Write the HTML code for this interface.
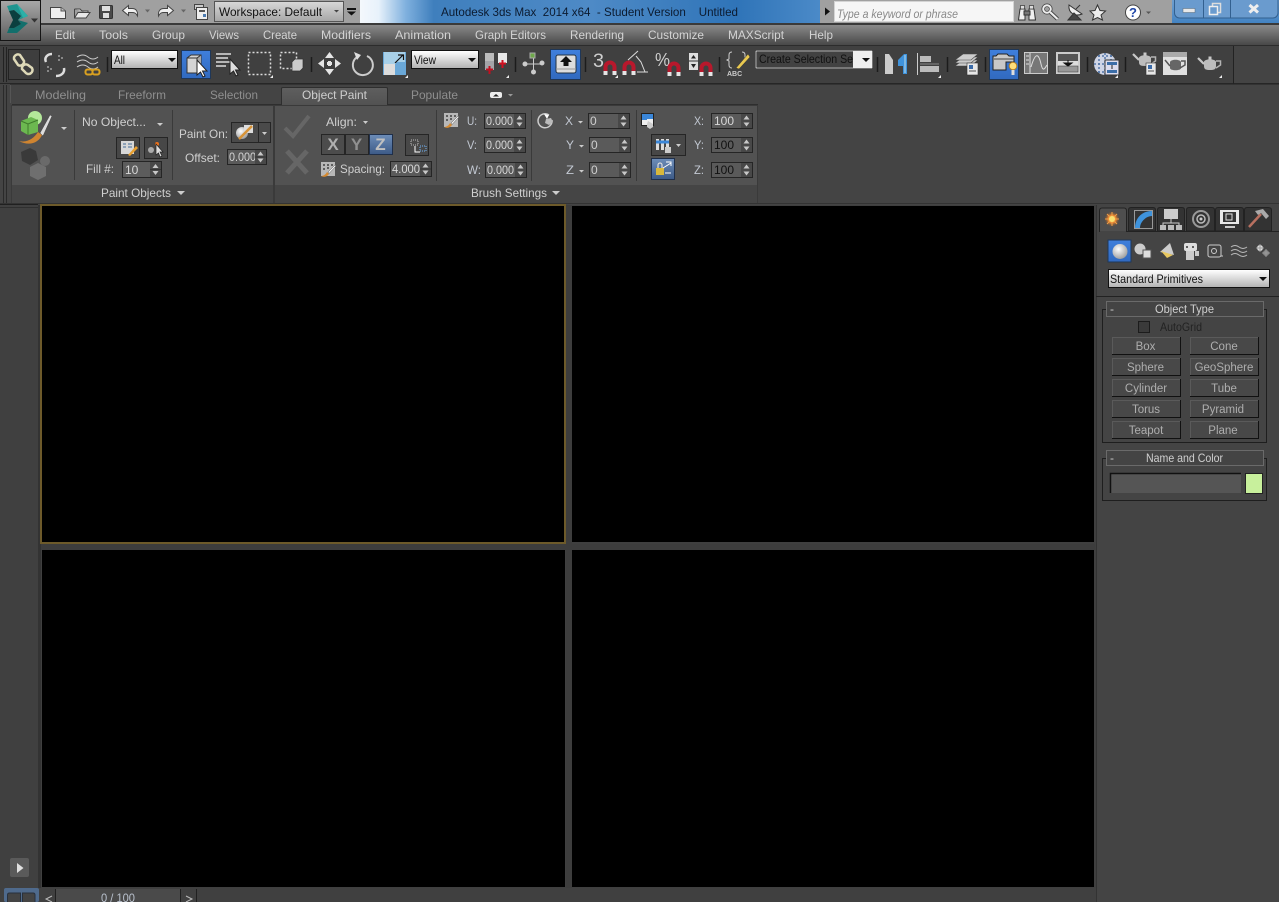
<!DOCTYPE html>
<html><head><meta charset="utf-8"><title>Autodesk 3ds Max 2014</title>
<style>
html,body{margin:0;padding:0;background:#444;overflow:hidden;width:1279px;height:902px}
svg{display:block;position:absolute;left:0;top:0}
text{font-family:"Liberation Sans",sans-serif;font-size:12px;fill:#c8c8c8}
.m text{fill:#d4d4d4}
.t text{fill:#8f8f8f}
.l text{fill:#c2c8d2}
.p text{fill:#aeaeae;font-size:11.5px;text-anchor:middle}
</style></head><body>
<svg width="1279" height="902" viewBox="0 0 1279 902" xmlns="http://www.w3.org/2000/svg">
<defs>
<linearGradient id="menu" x1="0" y1="0" x2="0" y2="1"><stop offset="0" stop-color="#8a8a8a"/><stop offset="1" stop-color="#484848"/></linearGradient>
<linearGradient id="logo" x1="0" y1="0" x2="0" y2="1"><stop offset="0" stop-color="#a8a8a8"/><stop offset="1" stop-color="#5e5e5e"/></linearGradient>
<linearGradient id="dd" x1="0" y1="0" x2="0" y2="1"><stop offset="0" stop-color="#fff"/><stop offset="1" stop-color="#b4b4b4"/></linearGradient>
<linearGradient id="ws" x1="0" y1="0" x2="0" y2="1"><stop offset="0" stop-color="#d8d8d8"/><stop offset="1" stop-color="#a6a6a6"/></linearGradient>
<linearGradient id="blue" x1="0" y1="0" x2="1" y2="0"><stop offset="0" stop-color="#f4f8fc"/><stop offset=".04" stop-color="#e8f2fb"/><stop offset=".1" stop-color="#7fb0de"/><stop offset=".16" stop-color="#3f7fbd"/><stop offset=".5" stop-color="#4e8ac6"/><stop offset=".82" stop-color="#2f74b8"/><stop offset="1" stop-color="#4b8ac8"/></linearGradient>
<linearGradient id="win" x1="0" y1="0" x2="0" y2="1"><stop offset="0" stop-color="#86abd3"/><stop offset="1" stop-color="#3d7dbd"/></linearGradient>
<linearGradient id="z" x1="0" y1="0" x2="0" y2="1"><stop offset="0" stop-color="#6d8db8"/><stop offset="1" stop-color="#3c5a87"/></linearGradient>
<linearGradient id="sel" x1="0" y1="0" x2="0" y2="1"><stop offset="0" stop-color="#3f7fdc"/><stop offset="1" stop-color="#316ac0"/></linearGradient>
<linearGradient id="tab" x1="0" y1="0" x2="0" y2="1"><stop offset="0" stop-color="#5f5f5f"/><stop offset="1" stop-color="#525252"/></linearGradient>
<radialGradient id="sph" cx=".4" cy=".35" r=".7"><stop offset="0" stop-color="#fff"/><stop offset="1" stop-color="#9a9a9a"/></radialGradient>
<radialGradient id="sun" cx=".5" cy=".5" r=".5"><stop offset="0" stop-color="#ffe27a"/><stop offset=".5" stop-color="#e8802c"/><stop offset="1" stop-color="#5a4a3a" stop-opacity="0"/></radialGradient>
<g id="up"><path d="M-3 2L0-2 3 2z" fill="#c8c8c8"/></g>
<g id="dn"><path d="M-3-2L0 2 3-2z" fill="#c8c8c8"/></g>
<g id="mag"><path d="M-6.500 6V-1a6.500 6.500 0 0 1 13 0V6H2.500V-1a2.500 2.500 0 0 0-5 0V6z" fill="#b8182c"/><rect x="-6.500" y="3" width="4" height="4" fill="#e4e4e4"/><rect x="2.500" y="3" width="4" height="4" fill="#e4e4e4"/></g>
<g id="corner"><path d="M0 3L3 0V3z" fill="#eee"/></g>
<g id="teapot"><path d="M7 6.500C9 3.500 17 3.500 19 6.500V11C19 14.500 17 15 13 15S7 14.500 7 11z" fill="#bdbdbd"/><path d="M7 9L1 3" stroke="#c8c8c8" stroke-width="2.200" fill="none"/><path d="M19 6H23.500V10L19 13" stroke="#b4b4b4" stroke-width="1.500" fill="none"/><rect x="11.500" y="1.500" width="3" height="3" fill="#c8c8c8"/></g>
<g id="brush"><rect x="0" y="0" width="14" height="14" fill="#b8b8b8"/><g fill="#5e5e5e"><rect x="2" y="2" width="2" height="2"/><rect x="6" y="2" width="2" height="2"/><rect x="2" y="6" width="2" height="2"/><rect x="6" y="5" width="2" height="2"/><rect x="10" y="2" width="2" height="2"/></g><path d="M0 14C3 14 5 12 6 10L8 12C6 15 3 15.500 0 14z" fill="#d68a30"/><path d="M7 10L14 3 15 4 8 11.500z" fill="#f0f0f0" stroke="#333" stroke-width=".4"/></g>
</defs>

<rect width="1279" height="902" fill="#444"/>

<!-- title bar -->
<rect x="0" y="0" width="360" height="23" fill="#a0a0a0"/>
<rect x="360" y="0" width="460" height="23" fill="url(#blue)"/>
<rect x="820" y="0" width="352" height="23" fill="#a0a0a0"/>
<rect x="1172" y="0" width="107" height="23" fill="#4d8dcb"/>
<rect x="1172" y="0" width="107" height="23" fill="url(#win)" opacity=".6"/>
<rect x="0" y="23" width="1279" height="2" fill="#3a3a3a"/>
<path d="M1174.500 0V13a5 5 0 0 0 5 5H1273a5 5 0 0 0 5-5V0" fill="#6a9bce" stroke="#33608f"/>
<path d="M1203.500 0V18M1230.500 0V18" stroke="#33608f"/>
<rect x="1183" y="8.500" width="12" height="4" fill="#e8e8e8" stroke="#567" stroke-width=".5"/>
<rect x="1212.500" y="3.500" width="8" height="9" fill="none" stroke="#ddd" stroke-width="1.500"/><rect x="1209.500" y="6.500" width="8" height="8" fill="#6a9bce" stroke="#eee" stroke-width="1.500"/>
<path d="M1249.500 5L1258 12.500M1258 5L1249.500 12.500" stroke="#eee" stroke-width="3"/>

<!-- quick access icons -->
<path d="M50.500 7.500H61L65.500 11V18.500H50.500z" fill="#efefef" stroke="#444"/><path d="M61 7.500V11H65.500" fill="#bbb" stroke="#555"/>
<path d="M74.500 9H80L82 11H88V13" fill="#ddd" stroke="#444"/><path d="M74.500 9V18H86L90 12.500H78L74.500 18" fill="#e8e8e8" stroke="#444"/>
<rect x="99.500" y="5.500" width="13" height="13" rx="1" fill="#4a4a4a" stroke="#333"/><rect x="102" y="6" width="8" height="5" fill="#e0e0e0"/><rect x="103" y="13" width="6" height="5" fill="#e0e0e0"/>
<path d="M122.500 10.500L128.500 5.500V8.500H132C136 8.500 138 11 137.500 16C136 13 134.500 12.500 132 12.500H128.500V15.500z" fill="#f0f0f0" stroke="#444"/>
<path d="M145 9.500H150L147.500 12.500z" fill="#666"/>
<path d="M173.500 10.500L167.500 5.500V8.500H164C160 8.500 158 11 158.500 16C160 13 161.500 12.500 164 12.500H167.500V15.500z" fill="#f0f0f0" stroke="#444"/>
<path d="M181 9.500H186L183.500 12.500z" fill="#666"/>
<rect x="194.500" y="4.500" width="9" height="5" fill="#ccc" stroke="#444"/><rect x="196.500" y="7.500" width="11" height="12" fill="#eee" stroke="#444"/><rect x="199" y="10" width="6" height="2" fill="#555"/><rect x="203" y="14" width="3" height="3" fill="#4a7ab0"/>

<!-- workspace -->
<rect x="214.500" y="1.500" width="129" height="20" fill="url(#ws)" stroke="#555"/>
<text x="219" y="16" textLength="103" lengthAdjust="spacingAndGlyphs" fill="#111" style="fill:#111">Workspace: Default</text>
<path d="M334 10H339L336.500 12.500z" fill="#444"/>
<rect x="347" y="8" width="9" height="2" fill="#111"/><path d="M347 11.500H356L351.500 15.500z" fill="#111"/>

<text x="441" y="16" textLength="297" lengthAdjust="spacingAndGlyphs" style="fill:#0c1b30" xml:space="preserve">Autodesk 3ds Max  2014 x64  - Student Version    Untitled</text>

<!-- search -->
<path d="M825 7.500L830 11.500 825 15.500z" fill="#111"/>
<rect x="834" y="1" width="180" height="21" fill="#f6f6f6"/><rect x="834.500" y="1.500" width="179" height="20" fill="none" stroke="#d4d4d4"/>
<text x="837" y="18" textLength="121" lengthAdjust="spacingAndGlyphs" font-style="italic" style="fill:#888">Type a keyword or phrase</text>
<!-- binoculars -->
<path d="M1020 9H1025V20H1018.500zM1029 9H1034L1035.500 20H1029z" fill="#f0f0f0" stroke="#333"/><rect x="1024" y="11" width="6" height="4" fill="#777" stroke="#333"/><rect x="1020.500" y="5.500" width="4" height="3.500" fill="#ddd" stroke="#333" stroke-width=".7"/><rect x="1029.500" y="5.500" width="4" height="3.500" fill="#ddd" stroke="#333" stroke-width=".7"/>
<!-- key -->
<circle cx="1047" cy="9" r="3.800" fill="none" stroke="#444" stroke-width="3.500"/><circle cx="1047" cy="9" r="3.800" fill="none" stroke="#eee" stroke-width="2"/><path d="M1050 12L1057.500 19" stroke="#444" stroke-width="4"/><path d="M1050 12L1057.500 19" stroke="#eee" stroke-width="2.200"/>
<!-- satellite -->
<path d="M1069 5C1068 13 1075 17 1082 14z" fill="#eee" stroke="#333"/><path d="M1074 13L1068 20H1081z" fill="#444" stroke="#333"/><path d="M1076 9L1080 5" stroke="#333"/>
<!-- star -->
<path d="M1097.500 5L1100 10.500 1105.500 11 1101 15 1102.500 20 1097.500 17.500 1092.500 20 1094 15 1090 11 1095 10.500z" fill="#eee" stroke="#333"/>
<!-- help -->
<circle cx="1133" cy="12.500" r="7.500" fill="#fff" stroke="#444"/><text x="1129" y="17" style="fill:#1f46a8;font-weight:bold;font-size:13px">?</text>
<path d="M1146 11.500H1151L1148.500 14z" fill="#555"/>

<!-- menu -->
<rect x="0" y="25" width="1279" height="20" fill="url(#menu)"/>
<g class="m">
<text x="55" y="39" textLength="20" lengthAdjust="spacingAndGlyphs">Edit</text>
<text x="99" y="39" textLength="29" lengthAdjust="spacingAndGlyphs">Tools</text>
<text x="152" y="39" textLength="33" lengthAdjust="spacingAndGlyphs">Group</text>
<text x="209" y="39" textLength="30" lengthAdjust="spacingAndGlyphs">Views</text>
<text x="263" y="39" textLength="34" lengthAdjust="spacingAndGlyphs">Create</text>
<text x="321" y="39" textLength="50" lengthAdjust="spacingAndGlyphs">Modifiers</text>
<text x="395" y="39" textLength="56" lengthAdjust="spacingAndGlyphs">Animation</text>
<text x="475" y="39" textLength="71" lengthAdjust="spacingAndGlyphs">Graph Editors</text>
<text x="570" y="39" textLength="54" lengthAdjust="spacingAndGlyphs">Rendering</text>
<text x="648" y="39" textLength="56" lengthAdjust="spacingAndGlyphs">Customize</text>
<text x="728" y="39" textLength="56" lengthAdjust="spacingAndGlyphs">MAXScript</text>
<text x="809" y="39" textLength="24" lengthAdjust="spacingAndGlyphs">Help</text>
</g>

<!-- logo (over the menu and title bar) -->
<rect x="0.500" y="0.500" width="40" height="40" fill="url(#logo)" stroke="#151515"/>
<path d="M7 6L17 4 28 16 18 20 21 16 14 10 9 11z" fill="#1f948f"/>
<path d="M7 33L17 33 28 23 18 20 21 24 14 28 9 28z" fill="#136f6c"/>
<path d="M9 11L14 10 21 16 18 20 21 24 14 28 9 28 13 20z" fill="#0b3f3f"/>
<path d="M17 4L28 16 23 18z" fill="#2bb0a8"/>
<path d="M31 18.500H38L34.500 22.500z" fill="#333"/>

<!-- main toolbar -->
<rect x="0" y="45" width="1233" height="39" fill="#404040"/>
<rect x="0" y="45" width="1279" height="1" fill="#2c2c2c"/>
<rect x="0" y="83" width="1279" height="1" fill="#262626"/>
<rect x="1233" y="46" width="1" height="38" fill="#222"/>
<path d="M3.500 47V82M6.500 47V82" stroke="#222"/>
<g stroke="#1c1c1c" stroke-width="1.500"><path d="M107.500 57V72M311.500 57V72M515.500 57V72M585.500 57V72M719.500 57V72M877.500 57V72M947.500 57V72M985.500 57V72M1087.500 57V72M1125.500 57V72"/></g>

<!-- link -->
<rect x="8.500" y="49.500" width="31" height="30" fill="#3e3e3e" stroke="#222"/>
<path d="M20 55a4 4 0 0 0-6 4l4 6a4 4 0 0 0 6-4z" fill="none" stroke="#ded9b8" stroke-width="2.500"/><path d="M28 65a4 4 0 0 0-6 4l3 3a4 4 0 0 0 7-4z" fill="none" stroke="#ded9b8" stroke-width="2.500"/>
<!-- unlink -->
<path d="M52 54c-5 0-8 4-6 8M56 76c5 0 9-3 8-8" fill="none" stroke="#ddd" stroke-width="2.500"/>
<g fill="#888"><rect x="58" y="55" width="2" height="2"/><rect x="61" y="57" width="2" height="2"/><rect x="58" y="59" width="2" height="2"/><rect x="47" y="66" width="2" height="2"/><rect x="50" y="68" width="2" height="2"/><rect x="47" y="70" width="2" height="2"/></g>
<!-- bind -->
<g fill="none" stroke="#ccc"><path d="M77 57q6-4 11 0t10 0M77 62q6-4 11 0t10 0M77 67q6-4 11 0t10 0"/></g>
<rect x="85.500" y="69.500" width="7" height="5" rx="2" fill="none" stroke="#d9a020" stroke-width="2"/><rect x="92.500" y="69.500" width="7" height="5" rx="2" fill="none" stroke="#d9a020" stroke-width="2"/>

<!-- All dropdown -->
<rect x="111" y="50" width="67" height="19" fill="#111"/><rect x="112" y="51" width="65" height="17" fill="url(#dd)"/>
<text x="114" y="64" textLength="11" lengthAdjust="spacingAndGlyphs" style="fill:#111">All</text>
<path d="M168 58H176L172 62z" fill="#111"/>
<!-- select -->
<rect x="181" y="50" width="30" height="29" fill="#1f3758"/><rect x="182" y="51" width="28" height="27" fill="url(#sel)"/>
<path d="M187 58L191 55H201V70L197 73H187z" fill="#d4d4d4" stroke="#333"/><path d="M197 58L201 55V70L197 73z" fill="#a8a8a8"/><path d="M197 58H187M197 58L201 55M197 58V73" stroke="#333" fill="none"/>
<path d="M197 60V75L200.500 72 203 77 205 76 202.500 71H207z" fill="#fff" stroke="#222"/>
<!-- select by name -->
<path d="M216 54H231M216 58H228M216 62H231M216 66H226" stroke="#ddd" stroke-width="1.500"/>
<path d="M230 59V74L233.500 71 236 76 238 75 235.500 70H240z" fill="#ddd" stroke="#222"/>
<!-- rect region -->
<rect x="248.500" y="52.500" width="22" height="22" fill="none" stroke="#ddd" stroke-width="1.500" stroke-dasharray="2 2"/><use href="#corner" x="270" y="75"/>
<!-- window/crossing -->
<rect x="280.500" y="52.500" width="16" height="16" fill="none" stroke="#ddd" stroke-dasharray="2 2" stroke-width="1.500"/>
<path d="M292 62L295 59H303V68L300 71H292z" fill="#ccc" stroke="#333" stroke-width=".7"/>
<!-- move -->
<g fill="#e6e6e6"><path d="M329.500 52L334 58H325zM329.500 75L334 69H325zM318 63.500L324 59V68zM341 63.500L335 59V68z"/><rect x="328" y="61" width="3" height="5"/><rect x="327" y="62" width="5" height="3"/></g>
<!-- rotate -->
<path d="M367 56a10 10 0 1 1-10 1" fill="none" stroke="#ccc" stroke-width="2"/><path d="M354 52L361 55 357 60z" fill="#ddd"/>
<!-- scale -->
<rect x="383" y="52" width="23" height="23" fill="#6aa8d8"/><rect x="384" y="64" width="11" height="11" fill="#ddd"/><path d="M384 52H405V62H396V64H384z" fill="#a8d0e8"/><path d="M395 63L403 55M398 55H403.500V60" stroke="#111" stroke-width="1.200" fill="none"/><use href="#corner" x="405" y="75"/>
<!-- View dropdown -->
<rect x="411" y="50" width="68" height="19" fill="#111"/><rect x="412" y="51" width="66" height="17" fill="url(#dd)"/>
<text x="414" y="64" textLength="22" lengthAdjust="spacingAndGlyphs" style="fill:#111">View</text>
<path d="M468 58H476L472 62z" fill="#111"/>
<!-- snap pivot -->
<rect x="485" y="53" width="9" height="17" fill="#a4a4a8"/><rect x="485" y="53" width="9" height="8" fill="#bbb"/><path d="M489.500 66V74M486 69.500H493" stroke="#c01020" stroke-width="2"/>
<rect x="498" y="53" width="9" height="10" fill="#e8e8e8"/><path d="M502.500 60V68M499 63.500H506" stroke="#d01020" stroke-width="2"/><use href="#corner" x="506" y="75"/>
<!-- pivot -->
<path d="M533.500 56V74M525 64H542" stroke="#ccc"/><rect x="530" y="53" width="5" height="5" fill="#6ea84a" stroke="#aaa"/><circle cx="525" cy="64" r="2.500" fill="#ccc"/><circle cx="542" cy="63" r="2.500" fill="#ccc"/><circle cx="533.500" cy="72" r="2.500" fill="#ccc"/>
<!-- keyboard override -->
<rect x="550" y="49" width="31" height="31" fill="#1f3758"/><rect x="551" y="50" width="29" height="29" fill="url(#sel)"/><rect x="556" y="55" width="20" height="18" rx="2" fill="#ddd" stroke="#234"/><path d="M556 69H576" stroke="#999"/><path d="M566 56L572 62H568.500V66H563.500V62H560z" fill="#111"/>
<!-- snaps -->
<text x="593" y="67" style="font-size:19px;fill:#cfcfcf" textLength="11" lengthAdjust="spacingAndGlyphs">3</text><use href="#mag" x="610" y="68"/><use href="#corner" x="615" y="75"/>
<path d="M628 60L638 51" stroke="#ddd"/><use href="#mag" x="629" y="68"/><path d="M636 56L641 62 645 72M637 72H648" stroke="#ddd" fill="none"/>
<text x="655" y="66" style="font-size:18px;fill:#cfcfcf" textLength="15" lengthAdjust="spacingAndGlyphs">%</text><use href="#mag" x="674" y="69"/>
<rect x="689" y="53" width="9" height="17" fill="#ddd"/><path d="M689 61H698" stroke="#333"/><path d="M693.500 55L696 58.500H691zM693.500 68L696 64H691z" fill="#222"/><use href="#mag" x="706" y="69"/>
<!-- named sel -->
<path d="M732 52c-2 0-3 1-3 3v4l-2 1 2 1v4c0 2 1 3 3 3M742 52c2 0 3 1 3 3v4" fill="none" stroke="#ccc"/>
<path d="M736 68L748 54 750 57 739 69z" fill="#e8c850" stroke="#333" stroke-width=".5"/>
<text x="727" y="76" style="font-size:7px;font-weight:bold;fill:#ccc">ABC</text>
<rect x="755" y="50" width="118" height="19" fill="#111"/><rect x="756" y="51" width="116" height="17" fill="none" stroke="#ddd"/><rect x="757" y="52" width="96" height="15" fill="#424242"/>
<text x="759" y="63" textLength="94" lengthAdjust="spacingAndGlyphs" style="fill:#111">Create Selection Se</text>
<rect x="853" y="51" width="19" height="17" fill="#f0f0f0"/><path d="M862 58H870L866 62z" fill="#111"/>
<!-- mirror -->
<path d="M885 54H889L893 60V74H885z" fill="#ccc"/><path d="M907 54H904L898 60V66H903V74H907z" fill="#3f93dc"/><path d="M905 55V73" stroke="#bde" stroke-width="1"/>
<!-- align -->
<path d="M917.500 53V75" stroke="#ccc"/><rect x="920" y="56" width="11" height="6" fill="#bbb"/><rect x="920" y="66" width="19" height="6" fill="#bbb"/><path d="M920 64H939" stroke="#888"/><use href="#corner" x="938" y="75"/>
<!-- layers -->
<g fill="#ccc" stroke="#444" stroke-width=".6"><path d="M955 66L963 60H978L971 66z"/><path d="M955 63L963 57H978L971 63z"/><path d="M955 60L963 54H978L971 60z"/></g>
<rect x="967" y="63" width="11" height="12" fill="#e8e8e8" stroke="#333" stroke-width=".6"/><rect x="969" y="65" width="4" height="4" fill="#3a6aa8"/><path d="M969 71H976" stroke="#555"/>
<!-- scene explorer -->
<rect x="989" y="49" width="30" height="31" fill="#1f3758"/><rect x="990" y="50" width="28" height="29" fill="url(#sel)"/><path d="M993 70V56H996L998 54H1007L1009 56H1014V62H1006V70z" fill="#c8c8c8" stroke="#222"/><path d="M994 59H1014" stroke="#444"/><circle cx="1013" cy="66" r="3.800" fill="#ffde7a" stroke="#b57f20"/><rect x="1011.500" y="70" width="3" height="5" fill="#ddd"/>
<!-- curve editor -->
<rect x="1024" y="52" width="24" height="22" fill="#ccc"/><rect x="1025" y="53" width="22" height="20" fill="#777"/><path d="M1030 53V73M1026 56H1029M1026 60H1029M1026 64H1029" stroke="#ddd"/><path d="M1031 67C1036 50 1039 55 1041 64S1045 68 1047 65" fill="none" stroke="#ddd"/>
<!-- schematic -->
<rect x="1056" y="52" width="24" height="22" fill="#ccc"/><rect x="1058" y="54" width="20" height="7" fill="#555"/><rect x="1058" y="61" width="20" height="5" fill="#ddd"/><rect x="1058" y="66" width="20" height="6" fill="#999" stroke="#333" stroke-width=".5"/><path d="M1068 60V64M1064 63L1068 66 1072 63z" fill="#111" stroke="#111"/>
<!-- material -->
<circle cx="1105" cy="64" r="11" fill="#cfd5e6"/><path d="M1098 56L1112 56M1094 64H1116M1098 72H1112M1105 53V75M1099 55V73M1111 55V73" stroke="#5577a8" stroke-width="1.500" stroke-dasharray="2 2"/>
<rect x="1105" y="60" width="14" height="15" fill="#dde" stroke="#333"/><rect x="1107" y="62" width="10" height="3" fill="#3c6ea8"/><rect x="1107" y="70" width="10" height="3" fill="#3c6ea8"/><path d="M1112 65V69" stroke="#222"/><use href="#corner" x="1115" y="75"/>
<!-- render setup teapot -->
<use href="#teapot" x="1132" y="51"/>
<rect x="1146" y="63" width="10" height="12" fill="#e8e8e8" stroke="#333" stroke-width=".6"/><rect x="1148" y="65" width="4" height="4" fill="#3a6aa8"/><path d="M1148 71H1154" stroke="#555"/>
<!-- rendered frame -->
<rect x="1163" y="52" width="24" height="23" fill="#e0e0e0"/><rect x="1163" y="52" width="24" height="5" fill="#aaa"/>
<path d="M1170 62C1171 59 1180 59 1181 62V68C1181 71 1170 71 1170 68z" fill="#666"/><path d="M1165 60L1170 66M1181 61H1185V65L1180 68" fill="none" stroke="#555" stroke-width="1.500"/>
<!-- render teapot -->
<use href="#teapot" x="1197" y="55"/><use href="#corner" x="1219" y="75"/>

<!-- ribbon -->
<path d="M3.500 85V204M6.500 85V204" stroke="#2a2a2a"/>
<rect x="10" y="84" width="1269" height="1" fill="#333"/>
<rect x="10" y="85" width="1" height="18" fill="#555"/>
<g class="t">
<text x="35" y="99" textLength="51" lengthAdjust="spacingAndGlyphs">Modeling</text>
<text x="118" y="99" textLength="48" lengthAdjust="spacingAndGlyphs">Freeform</text>
<text x="210" y="99" textLength="48" lengthAdjust="spacingAndGlyphs">Selection</text>
<text x="411" y="99" textLength="47" lengthAdjust="spacingAndGlyphs">Populate</text>
</g>
<rect x="12" y="105" width="746" height="98" fill="#525252"/>
<path d="M281.500 105V88L283 87.500H386L387.500 88V105" fill="url(#tab)" stroke="#2e2e2e"/>
<path d="M12 104.500H281M388 104.500H758" stroke="#2e2e2e"/>
<text x="302" y="99" textLength="65" lengthAdjust="spacingAndGlyphs" style="fill:#cfcfcf">Object Paint</text>
<rect x="490" y="92" width="12" height="6" rx="2" fill="#ececec"/><path d="M493 96.500L496 94 499 96.500z" fill="#222"/><path d="M508 94H513L510.500 96.500z" fill="#999"/>

<rect x="11.500" y="105.500" width="262" height="98" fill="none" stroke="#3a3a3a"/>
<rect x="274.500" y="105.500" width="483" height="98" fill="none" stroke="#3a3a3a"/>
<rect x="12" y="185" width="261" height="18" fill="#454545"/>
<rect x="275" y="185" width="482" height="18" fill="#454545"/>
<text x="101" y="197" textLength="70" lengthAdjust="spacingAndGlyphs" style="fill:#d0d0d0">Paint Objects</text><path d="M177 191H185L181 195z" fill="#ccc"/>
<text x="471" y="197" textLength="76" lengthAdjust="spacingAndGlyphs" style="fill:#d0d0d0">Brush Settings</text><path d="M552 191H560L556 195z" fill="#ccc"/>
<rect x="0" y="203" width="1279" height="1" fill="#333"/>

<!-- Paint Objects content -->
<circle cx="35" cy="118" r="7" fill="#b4e89a"/><path d="M21 121L31 117 38 120V132L28 135 21 131z" fill="#6cb850"/><path d="M21 121L28 124 38 120M28 124V135" stroke="#3f7a2c" fill="none"/>
<path d="M19 141C28 143 34 138 38 132L42 135C39 142 30 147 19 141z" fill="#cf8430"/><path d="M40 133L50 115 52 116 43 136z" fill="#ddd" stroke="#444" stroke-width=".5"/>
<path d="M61 127H67L64 130z" fill="#ccc"/>
<path d="M21 152L30 148 36 151 38 160 30 165 22 161z" fill="#3a3a3a"/><circle cx="45" cy="161" r="5" fill="#6a6a6a"/><path d="M30 167L38 163 46 167V176L38 180 30 176z" fill="#6f6f6f"/>
<path d="M74.500 110V180M172.500 110V180" stroke="#3a3a3a"/>
<text x="82" y="126" textLength="64" lengthAdjust="spacingAndGlyphs" style="fill:#d0d0d0">No Object...</text><path d="M157 123H163L160 126z" fill="#ccc"/>
<rect x="116.500" y="137.500" width="23" height="21" fill="#474747" stroke="#252525"/><rect x="121" y="141" width="13" height="13" fill="#d8d8d8"/><path d="M123 144H126M128 144H132M123 147H126M128 147H132" stroke="#446c99"/><path d="M128 155L136 146 138 148 130 156z" fill="#e8a030"/>
<rect x="144.500" y="137.500" width="23" height="21" fill="#474747" stroke="#252525"/><circle cx="151" cy="150" r="3" fill="#aaa"/><circle cx="157" cy="144" r="2" fill="#e8701c"/><path d="M156 144V155L158.500 153 160 157 162 156 160 152H163z" fill="#ddd" stroke="#222" stroke-width=".7"/>
<text x="86" y="173" textLength="28" lengthAdjust="spacingAndGlyphs" style="fill:#cfcfcf">Fill #:</text>
<rect x="122.500" y="161.500" width="39" height="16" fill="#5c5c5c" stroke="#252525"/><text x="125" y="174" style="fill:#d8d8d8">10</text>
<rect x="150" y="162" width="11" height="15" fill="#484848"/><path d="M150 169.500H161" stroke="#333"/><use href="#up" x="155.500" y="166"/><use href="#dn" x="155.500" y="173"/>
<text x="179" y="138" textLength="49" lengthAdjust="spacingAndGlyphs" style="fill:#cfcfcf">Paint On:</text>
<rect x="231.500" y="122.500" width="27" height="20" fill="#4a4a4a" stroke="#252525"/><circle cx="242" cy="133" r="6" fill="url(#sph)"/><rect x="244" y="125" width="9" height="8" fill="#ddd"/><path d="M239 139L252 126" stroke="#d89438" stroke-width="2.500"/>
<rect x="258.500" y="122.500" width="12" height="20" fill="#4a4a4a" stroke="#252525"/><path d="M262 132H267L264.500 135z" fill="#ccc"/>
<text x="185" y="162" textLength="35" lengthAdjust="spacingAndGlyphs" style="fill:#cfcfcf">Offset:</text>
<rect x="227.500" y="149.500" width="39" height="15" fill="#5a5a5a" stroke="#252525"/><text x="229" y="161" textLength="27" lengthAdjust="spacingAndGlyphs" style="fill:#d4d4d4">0.000</text>
<rect x="255" y="150" width="11" height="14" fill="#484848"/><path d="M255 157H266" stroke="#333"/><use href="#up" x="260.500" y="153.500"/><use href="#dn" x="260.500" y="160.500"/>

<!-- Align -->
<path d="M285 128L293 136 309 116" fill="none" stroke="#666" stroke-width="4"/>
<path d="M287 151L307 173M307 151L287 173" stroke="#666" stroke-width="5"/>
<text x="326" y="126" textLength="31" lengthAdjust="spacingAndGlyphs" style="fill:#cfcfcf">Align:</text><path d="M363 121H368L365.500 124z" fill="#ccc"/>
<rect x="321.500" y="134.500" width="23" height="20" fill="#4c4c4c" stroke="#252525"/>
<rect x="345.500" y="134.500" width="23" height="20" fill="#4c4c4c" stroke="#252525"/>
<rect x="369.500" y="134.500" width="23" height="20" fill="url(#z)" stroke="#1f2f4a"/>
<text x="333" y="150" text-anchor="middle" style="font-size:17px;font-weight:bold;fill:#b0b0b0">X</text>
<text x="356.500" y="150" text-anchor="middle" style="font-size:17px;font-weight:bold;fill:#909090">Y</text>
<text x="380.500" y="150" text-anchor="middle" style="font-size:17px;font-weight:bold;fill:#c0c0c0">Z</text>
<rect x="405.500" y="134.500" width="23" height="21" fill="#484848" stroke="#252525"/><path d="M411 140H418V145H411z" fill="none" stroke="#bbb" stroke-dasharray="1 1"/><path d="M420 146H426V151H420z" fill="none" stroke="#6fb0f0" stroke-dasharray="1 1"/><path d="M415 146V152H420" fill="none" stroke="#fff"/>
<use href="#brush" x="321" y="162"/>
<text x="340" y="173" textLength="45" lengthAdjust="spacingAndGlyphs" style="fill:#cfcfcf">Spacing:</text>
<rect x="390.500" y="161.500" width="41" height="15" fill="#5a5a5a" stroke="#252525"/><text x="392" y="173" textLength="28" lengthAdjust="spacingAndGlyphs" style="fill:#d8d8d8">4.000</text>
<rect x="420" y="162" width="11" height="14" fill="#484848"/><path d="M420 169H431" stroke="#333"/><use href="#up" x="425.500" y="165.500"/><use href="#dn" x="425.500" y="172.500"/>
<path d="M436.500 110V181M531.500 110V181M636.500 110V181" stroke="#3a3a3a"/>

<!-- UVW -->
<use href="#brush" x="444" y="113"/>
<g class="l">
<text x="467" y="125" textLength="10" lengthAdjust="spacingAndGlyphs">U:</text>
<text x="467" y="149" textLength="10" lengthAdjust="spacingAndGlyphs">V:</text>
<text x="467" y="174" textLength="14" lengthAdjust="spacingAndGlyphs">W:</text>
<text x="565" y="125" textLength="8" lengthAdjust="spacingAndGlyphs">X</text>
<text x="566" y="149" textLength="8" lengthAdjust="spacingAndGlyphs">Y</text>
<text x="566" y="174" textLength="8" lengthAdjust="spacingAndGlyphs">Z</text>
<text x="694" y="125" textLength="10" lengthAdjust="spacingAndGlyphs">X:</text>
<text x="694" y="149" textLength="10" lengthAdjust="spacingAndGlyphs">Y:</text>
<text x="694" y="174" textLength="10" lengthAdjust="spacingAndGlyphs">Z:</text>
</g>
<g fill="#5a5a5a" stroke="#252525">
<rect x="484.500" y="113.500" width="41" height="15"/><rect x="484.500" y="137.500" width="41" height="15"/><rect x="485.500" y="162.500" width="41" height="15"/>
<rect x="588.500" y="113.500" width="41" height="15"/><rect x="589.500" y="137.500" width="41" height="15"/><rect x="589.500" y="162.500" width="41" height="15"/>
<rect x="711.500" y="113.500" width="41" height="15"/><rect x="711.500" y="137.500" width="41" height="15"/><rect x="711.500" y="162.500" width="41" height="15"/>
</g>
<g fill="#484848">
<rect x="514" y="114" width="11" height="14"/><rect x="514" y="138" width="11" height="14"/><rect x="515" y="163" width="11" height="14"/>
<rect x="618" y="114" width="11" height="14"/><rect x="619" y="138" width="11" height="14"/><rect x="619" y="163" width="11" height="14"/>
<rect x="741" y="114" width="11" height="14"/><rect x="741" y="138" width="11" height="14"/><rect x="741" y="163" width="11" height="14"/>
</g>
<g><use href="#up" x="519.500" y="117.500"/><use href="#dn" x="519.500" y="124.500"/><use href="#up" x="519.500" y="141.500"/><use href="#dn" x="519.500" y="148.500"/><use href="#up" x="520.500" y="166.500"/><use href="#dn" x="520.500" y="173.500"/>
<use href="#up" x="623.500" y="117.500"/><use href="#dn" x="623.500" y="124.500"/><use href="#up" x="624.500" y="141.500"/><use href="#dn" x="624.500" y="148.500"/><use href="#up" x="624.500" y="166.500"/><use href="#dn" x="624.500" y="173.500"/>
<use href="#up" x="746.500" y="117.500"/><use href="#dn" x="746.500" y="124.500"/><use href="#up" x="746.500" y="141.500"/><use href="#dn" x="746.500" y="148.500"/><use href="#up" x="746.500" y="166.500"/><use href="#dn" x="746.500" y="173.500"/></g>
<text x="486" y="125" textLength="27" lengthAdjust="spacingAndGlyphs" style="fill:#d8d8d8">0.000</text>
<text x="486" y="149" textLength="27" lengthAdjust="spacingAndGlyphs" style="fill:#d8d8d8">0.000</text>
<text x="487" y="174" textLength="27" lengthAdjust="spacingAndGlyphs" style="fill:#d8d8d8">0.000</text>
<text x="590" y="125" style="fill:#cfcfcf">0</text><text x="591" y="149" style="fill:#cfcfcf">0</text><text x="591" y="174" style="fill:#cfcfcf">0</text>
<text x="714" y="125" textLength="20" lengthAdjust="spacingAndGlyphs" style="fill:#d8d8d8">100</text>
<text x="714" y="149" textLength="20" lengthAdjust="spacingAndGlyphs" style="fill:#111">100</text>
<text x="714" y="174" textLength="20" lengthAdjust="spacingAndGlyphs" style="fill:#111">100</text>
<g><path d="M578 121H583L580.500 123.500zM579 145H584L581.500 147.500zM579 170H584L581.500 172.500z" fill="#ccc"/></g>
<!-- rotate icon -->
<path d="M549 115a7 7 0 1 0 3 5" fill="none" stroke="#ccc" stroke-width="1.500"/><path d="M544 114L549 115 547 119z" fill="#fff"/><path d="M546 119L551 118 553 122 549 125 545 123z" fill="#bbb"/>
<!-- scale tile -->
<rect x="641.500" y="113.500" width="12" height="12" fill="#eee" stroke="#222"/><path d="M642 114H653V119H647V125H642z" fill="#3a86d8"/><path d="M642 120H647V125H642z" fill="#eee"/><path d="M648 121L653 124V127L650 129 647 127V124z" fill="#ccc"/>
<rect x="651.500" y="134.500" width="34" height="21" fill="#474747" stroke="#252525"/>
<g fill="#ddd"><rect x="656" y="139" width="3" height="11"/><rect x="661" y="139" width="3" height="11"/><rect x="666" y="139" width="3" height="11"/></g><path d="M656 142H669" stroke="#3a86d8" stroke-width="3"/><rect x="665" y="147" width="6" height="6" fill="#ccc"/><path d="M676 144H681L678.500 147z" fill="#ccc"/>
<rect x="651.500" y="158.500" width="23" height="21" fill="url(#z)" stroke="#1f2f4a"/><rect x="656" y="168" width="8" height="7" fill="#d8b83c"/><path d="M658 168V165a2 2 0 0 1 4 0V168" fill="none" stroke="#ddd" stroke-width="1.200"/><path d="M663 168L671 163M666 162H671V166M665 173H671" fill="none" stroke="#fff"/>

<!-- viewports -->
<rect x="0" y="205" width="1096" height="683" fill="#3f3f3f"/>
<rect x="0" y="205" width="38" height="683" fill="#404040"/>
<rect x="0" y="204" width="38" height="1" fill="#202020"/><rect x="0" y="207" width="38" height="1" fill="#2f2f2f"/>
<rect x="38" y="205" width="3" height="683" fill="#333"/>
<rect x="40" y="204" width="526" height="340" fill="#6d5a2a"/>
<rect x="42" y="206" width="522" height="336" fill="#000"/>
<rect x="572" y="206" width="522" height="336" fill="#000"/>
<rect x="42" y="550" width="523" height="337" fill="#000"/>
<rect x="572" y="550" width="522" height="337" fill="#000"/>
<rect x="566" y="205" width="6" height="683" fill="#3d3d3d"/>
<rect x="41" y="544" width="1054" height="6" fill="#3d3d3d"/>

<!-- play btn -->
<rect x="10" y="858" width="19" height="19" rx="2" fill="#5a5a5a"/><path d="M17 863L23.500 868 17 873z" fill="#e0e0e0"/>

<!-- timeline -->
<rect x="0" y="888" width="1279" height="14" fill="#404040"/>
<rect x="4" y="888" width="35" height="14" rx="2" fill="#4f6a8c"/>
<path d="M7.500 902V895Q7.500 893 9.500 893H20.500V902M22.500 902V893H33Q35 893 35 895V902" fill="#444" stroke="#28303c"/>
<path d="M52 896L46 899 52 902" fill="none" stroke="#bbb"/><path d="M55.500 889V902M180.500 889V902M196.500 889V902" stroke="#202020"/>
<rect x="56" y="889" width="124" height="13" fill="#4a4a4a"/>
<text x="118" y="902" text-anchor="middle" textLength="34" lengthAdjust="spacingAndGlyphs" style="fill:#b8c0cc">0 / 100</text>
<path d="M186 896L192 899 186 902" fill="none" stroke="#bbb"/>

<!-- command panel -->
<rect x="1096" y="205" width="183" height="697" fill="#444"/>
<rect x="1096" y="205" width="1" height="697" fill="#333"/>
<path d="M1099.500 231V211Q1099.500 208 1102 208H1124Q1126.500 208 1126.500 211V231" fill="#4e4e4e" stroke="#222"/>
<path d="M1099 231.500H1100M1126 231.500H1279" stroke="#222"/>
<g fill="#333" stroke="#222"><path d="M1128.500 231V210Q1128.500 207.500 1131 207.500H1153Q1155.500 207.500 1155.500 210V231z"/><path d="M1157.500 231V210Q1157.500 207.500 1160 207.500H1182Q1184.500 207.500 1184.500 210V231z"/><path d="M1186.500 231V210Q1186.500 207.500 1189 207.500H1212Q1214.500 207.500 1214.500 210V231z"/><path d="M1215.500 231V210Q1215.500 207.500 1218 207.500H1241Q1243.500 207.500 1243.500 210V231z"/><path d="M1244.500 231V210Q1244.500 207.500 1247 207.500H1268Q1271.500 207.500 1271.500 210V231z"/></g>
<circle cx="1112" cy="219" r="8" fill="url(#sun)"/><path d="M1112 212V226M1105 219H1119M1107 214L1117 224M1117 214L1107 224" stroke="#f0a048" stroke-width="1"/><circle cx="1112" cy="219" r="3" fill="#f8e070"/>
<rect x="1134.500" y="210.500" width="18" height="18" fill="none" stroke="#999"/><path d="M1135 228C1135 218 1142 211 1152 211V216C1146 216 1140 222 1140 228z" fill="#3f93dc"/>
<rect x="1164" y="209" width="14" height="10" fill="#ccc"/><path d="M1171 219V223M1163 226V223H1179V226" fill="none" stroke="#ccc"/><rect x="1160" y="225" width="6" height="5" fill="#bbb"/><rect x="1168" y="225" width="6" height="5" fill="#bbb"/><rect x="1176" y="225" width="6" height="5" fill="#bbb"/>
<circle cx="1201" cy="219" r="8" fill="none" stroke="#999" stroke-width="2"/><circle cx="1201" cy="219" r="4" fill="none" stroke="#bbb" stroke-width="1.500"/><circle cx="1201" cy="219" r="1.500" fill="#ccc"/>
<rect x="1220" y="210" width="19" height="14" fill="#e8e8e8"/><rect x="1223" y="212" width="13" height="10" fill="#333"/><rect x="1226" y="214" width="6" height="6" fill="none" stroke="#ddd"/><path d="M1225 227H1235" stroke="#ccc" stroke-width="2"/>
<path d="M1249 227L1261 214" stroke="#b87060" stroke-width="2.500"/><path d="M1255 211L1263 209 1269 216 1266 219 1261 213 1258 215z" fill="#aaa"/>

<rect x="1108" y="240" width="23" height="22" fill="url(#sel)" stroke="#1f3758"/><circle cx="1120" cy="251.500" r="7.500" fill="url(#sph)"/>
<circle cx="1140" cy="249" r="5.500" fill="#ccc"/><rect x="1143" y="250" width="8" height="8" fill="#ddd" stroke="#555"/>
<path d="M1160 252L1170 243 1174 255z" fill="#ccc"/><path d="M1161 251L1173 255 1167 258z" fill="#e8c860"/>
<rect x="1184" y="243" width="13" height="8" rx="2" fill="#ddd"/><rect x="1186" y="251" width="8" height="9" fill="#ccc"/><rect x="1195" y="251" width="4" height="5" fill="#ccc"/><circle cx="1187" cy="247" r="1" fill="#333"/><circle cx="1193" cy="247" r="1" fill="#333"/>
<rect x="1208" y="245" width="13" height="12" rx="2" fill="none" stroke="#ccc"/><circle cx="1214" cy="251" r="2.500" fill="none" stroke="#ccc"/><path d="M1221 256H1223" stroke="#ccc"/>
<g fill="none" stroke="#bbb"><path d="M1231 247q4-3 8 0t8 0M1231 251q4-3 8 0t8 0M1231 255q4-3 8 0t8 0"/></g>
<circle cx="1260" cy="248" r="3" fill="#ddd"/><circle cx="1266" cy="253" r="3" fill="#888"/><path d="M1260 244V252M1256 248H1264M1266 249V257M1262 253H1270" stroke="#999"/>

<rect x="1108" y="269" width="162" height="19" fill="#111"/><rect x="1109" y="270" width="160" height="17" fill="url(#dd)"/>
<text x="1110" y="283" textLength="93" lengthAdjust="spacingAndGlyphs" style="fill:#111">Standard Primitives</text>
<path d="M1259 277H1267L1263 281z" fill="#111"/>
<rect x="1096" y="296" width="183" height="1" fill="#222"/>

<rect x="1102.500" y="309.500" width="164" height="133" fill="none" stroke="#1e1e1e"/>
<rect x="1106.500" y="301.500" width="157" height="15" fill="#444" stroke="#6a6a6a"/>
<text x="1110" y="313" style="fill:#ccc">-</text>
<text x="1155" y="313" textLength="59" lengthAdjust="spacingAndGlyphs" style="fill:#d0d0d0">Object Type</text>
<rect x="1138.500" y="321.500" width="11" height="11" fill="#3a3a3a" stroke="#1c1c1c"/>
<text x="1160" y="331" textLength="42" lengthAdjust="spacingAndGlyphs" style="fill:#222">AutoGrid</text>

<!-- buttons: flat fill with light top-left and dark bottom-right edges -->
<g fill="#484848">
<rect x="1112" y="337" width="69" height="18"/><rect x="1190" y="337" width="69" height="18"/>
<rect x="1112" y="358" width="69" height="18"/><rect x="1190" y="358" width="69" height="18"/>
<rect x="1112" y="379" width="69" height="18"/><rect x="1190" y="379" width="69" height="18"/>
<rect x="1112" y="400" width="69" height="18"/><rect x="1190" y="400" width="69" height="18"/>
<rect x="1112" y="421" width="69" height="18"/><rect x="1190" y="421" width="69" height="18"/>
</g>
<g fill="none" stroke="#111">
<path d="M1112 354.500H1180.500V337M1190 354.500H1258.500V337"/>
<path d="M1112 375.500H1180.500V358M1190 375.500H1258.500V358"/>
<path d="M1112 396.500H1180.500V379M1190 396.500H1258.500V379"/>
<path d="M1112 417.500H1180.500V400M1190 417.500H1258.500V400"/>
<path d="M1112 438.500H1180.500V421M1190 438.500H1258.500V421"/>
</g>
<g fill="none" stroke="#5a5a5a">
<path d="M1112.500 354V337.500H1180M1190.500 354V337.500H1258"/>
<path d="M1112.500 375V358.500H1180M1190.500 375V358.500H1258"/>
<path d="M1112.500 396V379.500H1180M1190.500 396V379.500H1258"/>
<path d="M1112.500 417V400.500H1180M1190.500 417V400.500H1258"/>
<path d="M1112.500 438V421.500H1180M1190.500 438V421.500H1258"/>
</g>
<g class="p">
<text x="1145.500" y="350">Box</text><text x="1224" y="350">Cone</text>
<text x="1145.500" y="371">Sphere</text><text x="1224" y="371">GeoSphere</text>
<text x="1146" y="392">Cylinder</text><text x="1224" y="392">Tube</text>
<text x="1146" y="413">Torus</text><text x="1223" y="413">Pyramid</text>
<text x="1146" y="434">Teapot</text><text x="1223" y="434">Plane</text>
</g>

<rect x="1102.500" y="458.500" width="164" height="42" fill="none" stroke="#1e1e1e"/>
<rect x="1106.500" y="450.500" width="157" height="15" fill="#444" stroke="#6a6a6a"/>
<text x="1110" y="462" style="fill:#ccc">-</text>
<text x="1146" y="462" textLength="77" lengthAdjust="spacingAndGlyphs" style="fill:#d0d0d0">Name and Color</text>
<rect x="1110" y="473" width="131" height="20" fill="#555"/><path d="M1110.500 493V473.500H1241" fill="none" stroke="#111" stroke-width="1.500"/>
<rect x="1245.500" y="473.500" width="17" height="20" fill="#c8f09c" stroke="#222"/>
</svg>
</body></html>
